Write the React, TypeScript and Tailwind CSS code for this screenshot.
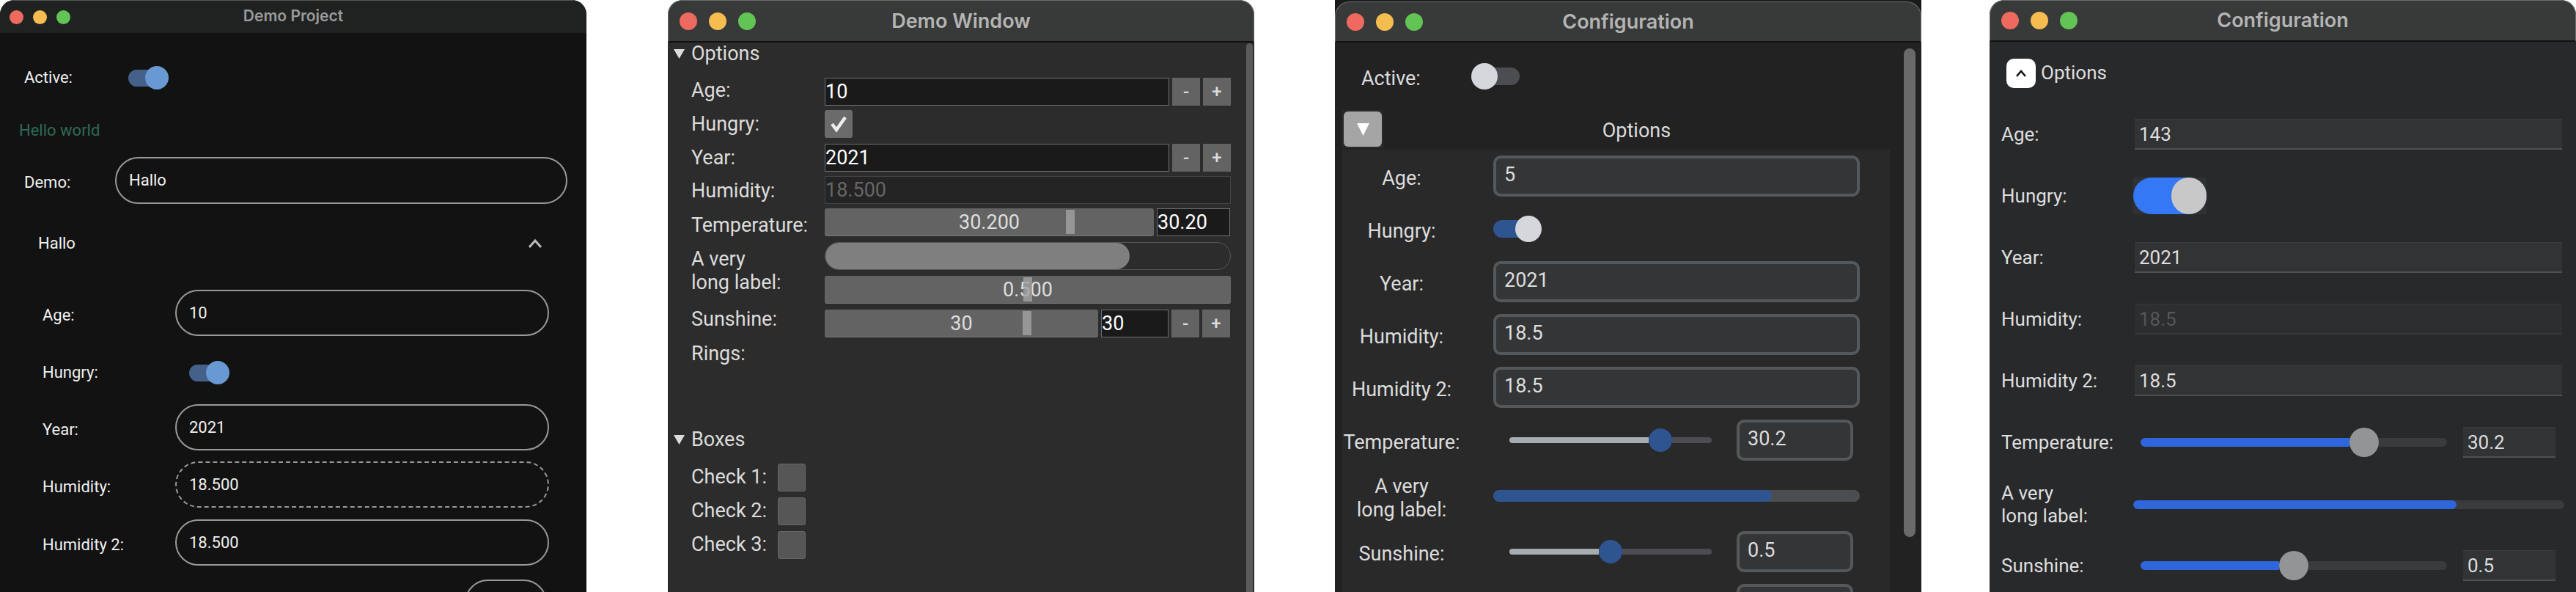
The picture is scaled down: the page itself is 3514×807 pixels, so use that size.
import React from "react";

function Lights({ size, gap }: { size: string; gap: string }) {
  return (
    <div className={`flex ${gap}`}>
      <span className={`${size} rounded-full bg-[#ee6a5f]`} />
      <span className={`${size} rounded-full bg-[#f5bd4f]`} />
      <span className={`${size} rounded-full bg-[#61c454]`} />
    </div>
  );
}

function Triangle() {
  return (
    <svg width="15" height="13" viewBox="0 0 15 13" className="shrink-0">
      <polygon points="0,0 15,0 7.5,13" fill="#dcdcdc" />
    </svg>
  );
}

function Tick() {
  return (
    <svg width="28" height="24" viewBox="0 0 28 24" fill="none" stroke="#eee" strokeWidth="4.5">
      <path d="M5 12 L11 20 L23 3" />
    </svg>
  );
}

function TitleBar({ title, height }: { title: string; height: string }) {
  return (
    <div className={`relative ${height} rounded-t-[20px] bg-[#383a39] border-t border-x border-[#6b6d6c] border-b-2 border-b-[#111] flex items-center pl-[15px]`}>
      <Lights size="w-[24px] h-[24px]" gap="gap-[16px]" />
      <div className="absolute inset-x-0 text-center font-['Inter',sans-serif] text-[27px] font-semibold text-[#b4b4b4]">{title}</div>
    </div>
  );
}

/* ---------- first window ---------- */

function PillInput({ value, dashed }: { value: string; dashed?: boolean }) {
  return (
    <div
      className={`w-[510px] h-[63px] rounded-full border-2 border-[#999] flex items-center pl-[17px] ${dashed ? "border-dashed" : ""}`}
    >
      {value}
    </div>
  );
}

function DarkToggle() {
  return (
    <div className="flex items-center w-[55px] h-[32px]">
      <div className="w-[30px] h-[23px] rounded-l-full bg-[#44618a]" />
      <div className="w-[32px] h-[32px] rounded-full bg-[#6899d3] -ml-[7px]" />
    </div>
  );
}

function DemoProject() {
  return (
    <div className="w-[800px] h-[807px] shrink-0 bg-[#121212] rounded-t-[20px] overflow-hidden text-[22px] leading-[32px] text-[#f0f0f0]">
      <div className="relative h-[45px] bg-[#202222] border-t border-[#555] flex items-center pl-[13px]">
        <Lights size="w-[19px] h-[19px]" gap="gap-[13px]" />
        <div className="absolute inset-x-0 -top-[2px] text-center font-['Inter',sans-serif] text-[21px] leading-[45px] font-semibold text-[#9a9a9a]">Demo Project</div>
      </div>
      <div className="flex items-center h-[32px] mt-[45px] pl-[33px]">
        <div className="w-[142px]">Active:</div>
        <DarkToggle />
      </div>
      <div className="h-[28px] mt-[42px] pl-[26px] leading-[28px] text-[#2e6b58]">Hello world</div>
      <div className="flex items-center mt-[22px] pl-[33px]">
        <div className="w-[124px] pt-[6px]">Demo:</div>
        <div className="w-[617px] h-[64px] rounded-full border-2 border-[#999] flex items-center pl-[17px]">Hallo</div>
      </div>
      <div className="flex items-center justify-between h-[32px] mt-[38px] pl-[52px] pr-[60px]">
        <span>Hallo</span>
        <svg width="20" height="14" viewBox="0 0 20 14" fill="none" stroke="#bbb" strokeWidth="3">
          <path d="M2 12 L10 3 L18 12" />
        </svg>
      </div>
      <div className="flex items-center mt-[47px] pl-[58px]">
        <div className="w-[181px] pt-[6px]">Age:</div>
        <PillInput value="10" />
      </div>
      <div className="flex items-center mt-[34px] pl-[58px]">
        <div className="w-[200px]">Hungry:</div>
        <DarkToggle />
      </div>
      <div className="flex items-center mt-[27px] pl-[58px]">
        <div className="w-[181px] pt-[6px]">Year:</div>
        <PillInput value="2021" />
      </div>
      <div className="flex items-center mt-[15px] pl-[58px]">
        <div className="w-[181px] pt-[6px]">Humidity:</div>
        <PillInput value="18.500" dashed />
      </div>
      <div className="flex items-center mt-[16px] pl-[58px]">
        <div className="w-[181px] pt-[6px]">Humidity 2:</div>
        <PillInput value="18.500" />
      </div>
      <div className="w-[112px] h-[63px] rounded-full border-2 border-[#999] mt-[19px] ml-[634px]" />
    </div>
  );
}

/* ---------- second window ---------- */

function StepBtn({ label }: { label: string }) {
  return (
    <div className="w-[38px] h-[38px] bg-[#636363] flex items-center justify-center text-[24px] font-medium text-[#dcdcdc]">
      {label}
    </div>
  );
}

function Stepper() {
  return (
    <div className="flex gap-[4px] ml-[4px]">
      <StepBtn label="-" />
      <StepBtn label="+" />
    </div>
  );
}

function DarkBox({ className, value }: { className: string; value: string }) {
  return (
    <div className={`h-[38px] bg-[#1a1a1a] border border-[#6f6f6f] flex items-center text-white ${className}`}>{value}</div>
  );
}

function ImSlider({ className, value, grab }: { className: string; value: string; grab: string }) {
  return (
    <div className={`relative h-[38px] bg-[#636363] rounded-[3px] border-b border-[#757575] flex items-center justify-center text-[#dedede] ${className}`}>
      <span>{value}</span>
      <div className={`absolute top-[2px] bottom-[2px] w-[12px] bg-[#a3a3a3] opacity-80 ${grab}`} />
    </div>
  );
}

function DemoWindow() {
  return (
    <div className="w-[800px] h-[807px] shrink-0 ml-[111px] bg-[#2c2c2c] rounded-t-[20px] overflow-hidden text-[27px] leading-[30px] text-[#dcdcdc]">
      <TitleBar title="Demo Window" height="h-[58px]" />
      <div className="flex h-[749px]">
        <div className="flex-1 pl-[8px]">
          <div className="flex items-center gap-[9px] h-[30px]">
            <Triangle />
            <span>Options</span>
          </div>
          <div className="flex items-center mt-[18px] pl-[24px]">
            <div className="w-[182px] pb-[4px]">Age:</div>
            <DarkBox className="w-[470px]" value="10" />
            <Stepper />
          </div>
          <div className="flex items-center mt-[6px] pl-[24px]">
            <div className="w-[182px]">Hungry:</div>
            <div className="w-[38px] h-[38px] rounded-[3px] bg-[#6b6b6b] flex items-center justify-center">
              <Tick />
            </div>
          </div>
          <div className="flex items-center mt-[8px] pl-[24px]">
            <div className="w-[182px]">Year:</div>
            <DarkBox className="w-[470px]" value="2021" />
            <Stepper />
          </div>
          <div className="flex items-center mt-[6px] pl-[24px]">
            <div className="w-[182px] pt-[2px]">Humidity:</div>
            <div className="w-[554px] h-[38px] bg-[#242424] border border-[#444] flex items-center text-[#666]">18.500</div>
          </div>
          <div className="flex items-center mt-[6px] pl-[24px]">
            <div className="w-[182px] pt-[8px]">Temperature:</div>
            <ImSlider className="w-[449px]" value="30.200" grab="left-[329px]" />
            <DarkBox className="w-[100px] ml-[4px]" value="30.20" />
          </div>
          <div className="flex mt-[8px] pl-[24px]">
            <div className="w-[182px] pt-[7px] leading-[32px]">
              A very
              <br />
              long label:
            </div>
            <div className="flex flex-col gap-[8px]">
              <div className="w-[554px] h-[38px] rounded-full border border-[#555] overflow-hidden">
                <div className="w-[415px] h-full rounded-full bg-[#7f7f7f]" />
              </div>
              <ImSlider className="w-[554px]" value="0.500" grab="left-[271px]" />
            </div>
          </div>
          <div className="flex items-center mt-[8px] pl-[24px]">
            <div className="w-[182px] -mt-[12px]">Sunshine:</div>
            <ImSlider className="w-[373px]" value="30" grab="left-[270px]" />
            <DarkBox className="w-[92px] ml-[4px]" value="30" />
            <Stepper />
          </div>
          <div className="h-[30px] mt-[7px] pl-[24px]">Rings:</div>
          <div className="flex items-center gap-[9px] h-[30px] mt-[87px]">
            <Triangle />
            <span>Boxes</span>
          </div>
          <div className="flex flex-col gap-[8px] mt-[18px] pl-[24px]">
            {["Check 1:", "Check 2:", "Check 3:"].map((label) => (
              <div className="flex items-center" key={label}>
                <div className="w-[118px] pb-[2px]">{label}</div>
                <div className="w-[38px] h-[38px] rounded-[3px] bg-[#565656] border border-[#666]" />
              </div>
            ))}
          </div>
        </div>
        <div className="w-[9px] mr-[2px] mt-[1px] rounded-t-full bg-[#5a5a5a]" />
      </div>
    </div>
  );
}

/* ---------- third window ---------- */

function ThickInput({ value, width }: { value: string; width: string }) {
  return (
    <div className={`h-[56px] rounded-[10px] border-4 border-[#55585a] bg-[#343537] flex items-center pl-[11px] pb-[4px] text-[#dedede] ${width}`}>
      {value}
    </div>
  );
}

function ConfigRow({ label, children }: { label: React.ReactNode; children: React.ReactNode }) {
  return (
    <div className="flex items-center">
      <div className="w-[162px] mr-[44px] text-center pt-[6px] shrink-0">{label}</div>
      {children}
    </div>
  );
}

function ThumbSlider({ fill, value }: { fill: string; value: string }) {
  return (
    <div className="flex items-center">
      <div className="flex items-center w-[276px] ml-[22px] mr-[34px]">
        <div className={`h-[8px] rounded-l-full bg-[#a8acaf] ${fill}`} />
        <div className="w-[32px] h-[32px] shrink-0 rounded-full bg-[#2f5591]" />
        <div className="flex-1 h-[8px] rounded-r-full bg-[#4c4d50]" />
      </div>
      <ThickInput width="w-[159px]" value={value} />
    </div>
  );
}

function Configuration() {
  return (
    <div className="w-[800px] h-[807px] shrink-0 ml-[110px] pt-[2px] overflow-hidden text-[27px] leading-[30px] text-[#dcdcdc] bg-[linear-gradient(#1a1a1a_0,#1a1a1a_22px,#fff_22px)]">
      <TitleBar title="Configuration" height="h-[56px]" />
      <div className="flex h-[749px] bg-[#222222]">
        <div className="w-[757px] pl-[10px]">
          <div className="flex items-center mt-[28px] h-[36px] pl-[26px]">
            <div className="w-[150px] pt-[6px]">Active:</div>
            <div className="flex items-center w-[66px]">
              <div className="w-[36px] h-[36px] rounded-full bg-[#d5d7dc] z-10 shrink-0" />
              <div className="w-[45px] h-[24px] -ml-[15px] rounded-r-full bg-[#4c4d50] shrink-0" />
            </div>
          </div>
          <div className="flex items-center mt-[28px] h-[52px]">
            <div className="w-[56px] h-[52px] bg-[#2a2a2a] flex items-center justify-center">
              <div className="w-[52px] h-[48px] rounded-[6px] bg-[#a5a5a6] flex items-center justify-center">
                <svg width="17" height="17" viewBox="0 0 17 17">
                  <polygon points="0,0 17,0 8.5,17" fill="#fff" />
                </svg>
              </div>
            </div>
            <div className="w-[691px] text-center pt-[4px]">Options</div>
          </div>
          <div className="w-[747px] mt-[2px] h-[620px] bg-[#292929] pt-[8px]">
            <ConfigRow label="Age:">
              <ThickInput width="w-[500px]" value="5" />
            </ConfigRow>
            <div className="mt-[26px]">
              <ConfigRow label="Hungry:">
                <div className="flex items-center w-[66px]">
                  <div className="w-[45px] h-[24px] rounded-l-full bg-[#2f5591] shrink-0" />
                  <div className="w-[36px] h-[36px] -ml-[15px] rounded-full bg-[#d5d7dc] shrink-0" />
                </div>
              </ConfigRow>
            </div>
            <div className="mt-[26px]">
              <ConfigRow label="Year:">
                <ThickInput width="w-[500px]" value="2021" />
              </ConfigRow>
            </div>
            <div className="mt-[16px]">
              <ConfigRow label="Humidity:">
                <ThickInput width="w-[500px]" value="18.5" />
              </ConfigRow>
            </div>
            <div className="mt-[16px]">
              <ConfigRow label="Humidity 2:">
                <ThickInput width="w-[500px]" value="18.5" />
              </ConfigRow>
            </div>
            <div className="mt-[16px]">
              <ConfigRow label="Temperature:">
                <ThumbSlider fill="w-[190px]" value="30.2" />
              </ConfigRow>
            </div>
            <div className="mt-[16px] flex items-start h-[80px]">
              <div className="w-[162px] mr-[44px] mt-[3px] text-center leading-[32px] shrink-0">
                A very
                <br />
                long label:
              </div>
              <div className="w-[500px] h-[16px] mt-[24px] rounded-full bg-[#4c4d50] overflow-hidden">
                <div className="w-[380px] h-full rounded-full bg-[#2f5591]" />
              </div>
            </div>
            <ConfigRow label="Sunshine:">
              <ThumbSlider fill="w-[122px]" value="0.5" />
            </ConfigRow>
            <div className="mt-[16px] ml-[538px]">
              <ThickInput width="w-[159px]" value="" />
            </div>
          </div>
        </div>
        <div className="ml-[19px] w-[16px] h-[666px] mt-[8px] rounded-full bg-[#6a6a6a]" />
      </div>
    </div>
  );
}

/* ---------- fourth window ---------- */

function FlatInput({ value, width, disabled }: { value: string; width: string; disabled?: boolean }) {
  return (
    <div
      className={`h-[42px] flex items-center pl-[6px] ${width} ${
        disabled
          ? "bg-[#2d2e30] border-t border-b-2 border-[#37383a] text-[#565758]"
          : "bg-[#323335] border-t border-b-2 border-t-[#3c3d3f] border-b-[#4f5052] text-[#dedede]"
      }`}
    >
      {value}
    </div>
  );
}

function FlatSlider({ fill, value }: { fill: string; value: string }) {
  return (
    <div className="flex items-center">
      <div className="flex items-center w-[418px] ml-[8px] mr-[22px]">
        <div className={`h-[12px] rounded-l-full bg-[#3066db] ${fill}`} />
        <div className="w-[40px] h-[40px] shrink-0 rounded-full bg-[#939495]" />
        <div className="flex-1 h-[12px] rounded-r-full bg-[#3a3b3d]" />
      </div>
      <FlatInput width="w-[126px]" value={value} />
    </div>
  );
}

function FlatRow({ label, children }: { label: string; children: React.ReactNode }) {
  return (
    <div className="flex items-center mt-[42px] pl-[16px]">
      <div className="w-[182px] shrink-0">{label}</div>
      {children}
    </div>
  );
}

function ConfigurationFlat() {
  return (
    <div className="w-[800px] h-[807px] shrink-0 ml-[93px] bg-[#28292b] rounded-t-[20px] overflow-hidden text-[26px] leading-[32px] text-[#dedede]">
      <TitleBar title="Configuration" height="h-[57px]" />
      <div className="flex items-center gap-[7px] mt-[23px] pl-[23px]">
        <div className="w-[40px] h-[40px] rounded-[10px] bg-white flex items-center justify-center">
          <svg width="14" height="10" viewBox="0 0 14 10" fill="none" stroke="#111" strokeWidth="2.5">
            <path d="M1 9 L7 2 L13 9" />
          </svg>
        </div>
        <span className="-mt-[2px]">Options</span>
      </div>
      <FlatRow label="Age:">
        <FlatInput width="w-[583px]" value="143" />
      </FlatRow>
      <div className="flex items-center mt-[38px] pl-[16px]">
        <div className="w-[180px] shrink-0">Hungry:</div>
        <div className="w-[100px] h-[50px] bg-[#303132]">
          <div className="w-full h-full rounded-full bg-[#3478f6] flex justify-end">
            <div className="w-[48px] h-[50px] rounded-full bg-[#c8c8c8]" />
          </div>
        </div>
      </div>
      <div className="flex items-center mt-[38px] pl-[16px]">
        <div className="w-[182px] shrink-0">Year:</div>
        <FlatInput width="w-[583px]" value="2021" />
      </div>
      <FlatRow label="Humidity:">
        <FlatInput width="w-[583px]" value="18.5" disabled />
      </FlatRow>
      <FlatRow label="Humidity 2:">
        <FlatInput width="w-[583px]" value="18.5" />
      </FlatRow>
      <FlatRow label="Temperature:">
        <FlatSlider fill="w-[285px]" value="30.2" />
      </FlatRow>
      <div className="flex items-center mt-[32px] pl-[16px] h-[63px]">
        <div className="w-[180px] shrink-0 leading-[31px]">
          A very
          <br />
          long label:
        </div>
        <div className="w-[588px] h-[12px] rounded-full bg-[#3a3b3d] overflow-hidden">
          <div className="w-[441px] h-full rounded-full bg-[#3066db]" />
        </div>
      </div>
      <div className="flex items-center mt-[31px] pl-[16px]">
        <div className="w-[182px] shrink-0">Sunshine:</div>
        <FlatSlider fill="w-[189px]" value="0.5" />
      </div>
    </div>
  );
}

export default function App() {
  return (
    <div className="flex w-[3514px] h-[807px] overflow-hidden bg-white font-['Roboto',sans-serif]">
      <DemoProject />
      <DemoWindow />
      <Configuration />
      <ConfigurationFlat />
    </div>
  );
}
